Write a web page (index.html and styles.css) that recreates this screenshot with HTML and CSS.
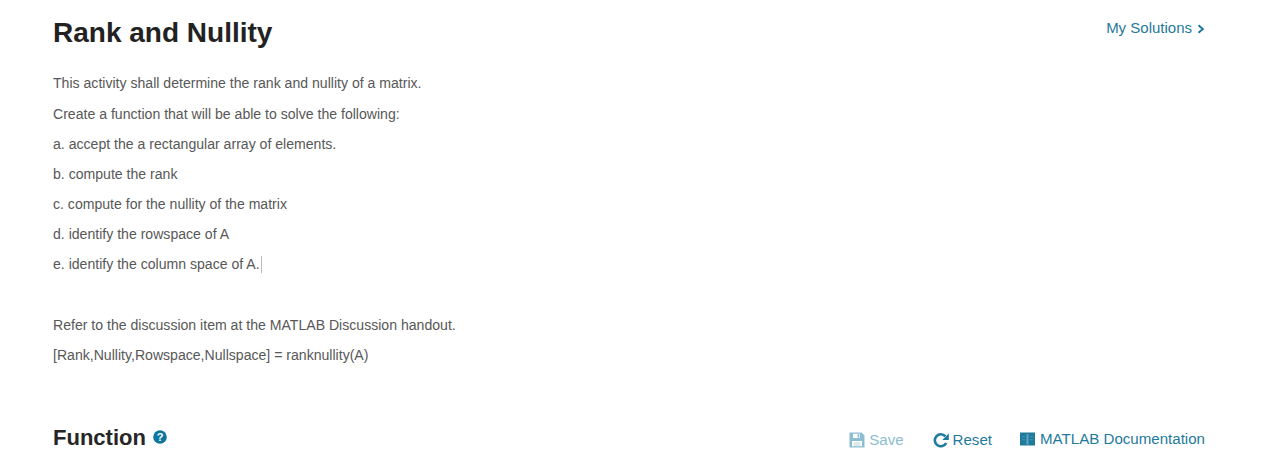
FILE: index.html
```html
<!DOCTYPE html>
<html lang="en">
<head>
<meta charset="utf-8">
<title>Rank and Nullity</title>
<link rel="stylesheet" href="styles.css">
</head>
<body>
<main class="page">
  <header class="title-row">
    <h1 class="title">Rank and Nullity</h1>
    <a class="solutions" href="#">My Solutions <svg class="chev" viewBox="0 0 8 10" width="8" height="10"><path d="M1.500 1.200 L5.800 5 L1.500 8.800" fill="none" stroke="currentColor" stroke-width="2"/></svg></a>
  </header>
  <section class="desc">
    <p>This activity shall determine the rank and nullity of a matrix.</p>
    <p>Create a function that will be able to solve the following:</p>
    <p>a. accept the a rectangular array of elements.</p>
    <p>b. compute the rank</p>
    <p>c. compute for the nullity of the matrix</p>
    <p>d. identify the rowspace of A</p>
    <p>e. identify the column space of A.<span class="caret"></span></p>
    <p>&nbsp;</p>
    <p>Refer to the discussion item at the MATLAB Discussion handout.</p>
    <p>[Rank,Nullity,Rowspace,Nullspace] = ranknullity(A)</p>
  </section>
  <footer class="fn-row">
    <div class="fn-head">
      <h2 class="fn-title">Function</h2>
      <svg class="help" viewBox="0 0 14 14" width="14" height="14"><circle cx="7" cy="7" r="6.800" fill="#0f76a0"/><text x="7" y="10.800" text-anchor="middle" class="help-q">?</text></svg>
    </div>
    <div class="actions">
      <a class="action disabled" href="#"><svg viewBox="0 0 16 16" width="16" height="16"><path fill="currentColor" fill-rule="evenodd" d="M0.500 0.500h12L15.500 3.500V15.500H0.500Z M4 1.800v4.200h7V1.800Z M8.500 2.300h1.800v3.200H8.500Z M3 9v5.300h10V9Z"/><path fill="currentColor" d="M4.500 10.500h7v1h-7Zm0 2h7v1h-7Z" opacity="0.600"/></svg>Save</a>
      <a class="action" href="#"><svg viewBox="0 0 16 16" width="16" height="16"><path fill="none" stroke="currentColor" stroke-width="2.600" d="M13.200 11A6 6 0 1 1 12.400 4.400"/><path fill="currentColor" d="M15.800 1.500v6.500h-6.500Z"/></svg>Reset</a>
      <a class="action doc" href="#"><svg viewBox="0 0 15 14" width="15" height="14"><path fill="currentColor" d="M0 0.500h15v13H0Z"/><path fill="#5fa6c2" d="M6.500 2h2v10.500h-2Z"/><path fill="#3d90b2" d="M2 4h3v1.300H2Zm0 3h3v1.300H2Zm8-3h3v1.300h-3Zm0 3h3v1.300h-3Z"/></svg>MATLAB Documentation</a>
    </div>
  </footer>
</main>
</body>
</html>
```
FILE: styles.css
```css
* { box-sizing: border-box; }
html, body { margin: 0; height: 463px; overflow: hidden; background: #fff; }
body { font-family: "Liberation Sans", Arial, sans-serif; color: #404040; }
.page { padding: 0 75px 0 53px; display: flex; flex-direction: column; }
.title-row { display: flex; justify-content: space-between; align-items: flex-start; height: 68px; }
.title { margin: 16px 0 0; font-size: 28px; line-height: 34px; font-weight: 700; color: #222; }
.solutions { margin-top: 18px; font-size: 15px; line-height: 20px; color: #1f7a9c; text-decoration: none; display: flex; align-items: center; gap: 5px; }
.chev { margin-top: 1px; }
.desc { height: 325px; padding-top: 0.320px; }
.desc p { margin: 0; font-size: 14.080px; line-height: 30.190px; color: #585858; }
.caret { display: inline-block; width: 1px; height: 17px; background: #bbb; vertical-align: -4px; margin-left: 1px; }
.fn-row { display: flex; justify-content: space-between; align-items: center; height: 40px; margin-top: 25px; }
.fn-head { display: flex; align-items: center; gap: 7px; }
.fn-title { margin: 0; font-size: 22px; line-height: 28px; font-weight: 700; color: #262626; }
.help { margin-bottom: 2px; }
.help-q { font: 700 11px "Liberation Sans", Arial, sans-serif; fill: #fff; }
.actions { display: flex; align-items: center; gap: 28px; margin-top: 3px; }
.action { display: flex; align-items: center; gap: 4px; font-size: 15.100px; line-height: 20px; color: #1f7a9c; text-decoration: none; }
.action.disabled { color: #8dbdd0; margin-right: 1px; }
.action.doc { gap: 5px; margin-bottom: 2px; }
```
